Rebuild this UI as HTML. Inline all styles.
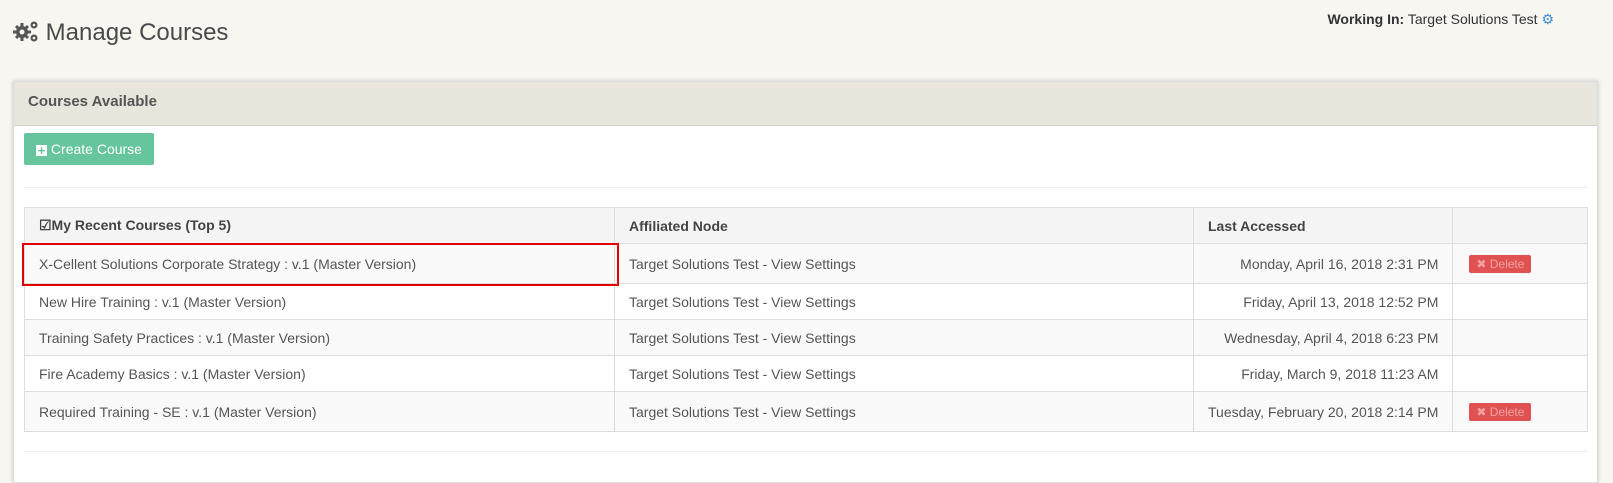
<!DOCTYPE html>
<html><head><style>
body{margin:0;width:1613px;height:465px;background:#f7f6f1;font-family:"Liberation Sans",sans-serif;color:#555;overflow:hidden;position:relative}
.abs{position:absolute}
h1{position:absolute;left:13px;top:19px;margin:0;font-weight:normal;font-size:24px;color:#4a4a4a;}
.work{position:absolute;right:59px;top:11px;font-size:14px;color:#333}
.panel{position:absolute;left:13px;top:81px;width:1583px;height:400px;background:#fff;border:1px solid #ddd;box-shadow:0 0 4px rgba(0,0,0,.2)}
.ph{height:43px;background:#e8e5dd;border-bottom:1px solid #d6d2c8;font-weight:bold;font-size:15px;color:#555;line-height:40px;padding-left:14px}
.btn{position:absolute;left:10px;top:51px;width:130px;height:32px;background:#66c59c;color:#fff;border-radius:2px;font-size:14px;line-height:32px;text-align:center}
table{position:absolute;left:10px;top:125px;width:1564px;border-collapse:collapse;font-size:14px}
td,th{border:1px solid #ddd;padding:0 14px;text-align:left;white-space:nowrap}
th{height:35px;background:#f4f4f4;color:#444;font-size:14px}
tr.o td{background:#f9f9f9}
td.r{text-align:right}
.del{display:inline-block;background:#e05252;color:#f4a0a0;font-size:12px;padding:2px 7px;border-radius:2px;margin-left:2px}
</style></head><body>
<h1><svg width="26" height="24" viewBox="0 0 26 24" style="vertical-align:-3px"><g fill="#555"><circle cx="9" cy="13" r="6"/><g stroke="#555" stroke-width="3"><line x1="9" y1="4" x2="9" y2="22"/><line x1="0" y1="13" x2="18" y2="13"/><line x1="3" y1="7" x2="15" y2="19"/><line x1="3" y1="19" x2="15" y2="7"/></g><circle cx="9" cy="13" r="2.5" fill="#f7f6f1"/><circle cx="21" cy="6" r="3.5"/><circle cx="21" cy="19" r="3.5"/><circle cx="21" cy="6" r="1.3" fill="#f7f6f1"/><circle cx="21" cy="19" r="1.3" fill="#f7f6f1"/></g></svg> Manage Courses</h1>
<div class="work"><b>Working In:</b> Target Solutions Test <span style="color:#3a8ad0">&#9881;</span></div>
<div class="panel">
<div class="ph">Courses Available</div>
<div class="btn"><span style="display:inline-block;width:11px;height:11px;background:#fff;color:#66c59c;font-weight:bold;line-height:11px;font-size:13px;vertical-align:-1px">+</span> Create Course</div>
<div class="abs" style="left:10px;top:105px;width:1564px;border-top:1px solid #eee"></div>
<table>
<tr><th style="width:561px">☑My Recent Courses (Top 5)</th><th style="width:550px">Affiliated Node</th><th style="width:230px">Last Accessed</th><th></th></tr>
<tr class="o" style="height:40px"><td>X-Cellent Solutions Corporate Strategy : v.1 (Master Version)</td><td>Target Solutions Test - View Settings</td><td class="r">Monday, April 16, 2018 2:31 PM</td><td><span class="del">✖ Delete</span></td></tr>
<tr style="height:36px"><td>New Hire Training : v.1 (Master Version)</td><td>Target Solutions Test - View Settings</td><td class="r">Friday, April 13, 2018 12:52 PM</td><td></td></tr>
<tr class="o" style="height:36px"><td>Training Safety Practices : v.1 (Master Version)</td><td>Target Solutions Test - View Settings</td><td class="r">Wednesday, April 4, 2018 6:23 PM</td><td></td></tr>
<tr style="height:36px"><td>Fire Academy Basics : v.1 (Master Version)</td><td>Target Solutions Test - View Settings</td><td class="r">Friday, March 9, 2018 11:23 AM</td><td></td></tr>
<tr class="o" style="height:40px"><td>Required Training - SE : v.1 (Master Version)</td><td>Target Solutions Test - View Settings</td><td class="r">Tuesday, February 20, 2018 2:14 PM</td><td><span class="del">✖ Delete</span></td></tr>
</table>
<div class="abs" style="left:10px;top:369px;width:1564px;border-top:1px solid #eee"></div>
</div>
<div class="abs" style="left:22px;top:243px;width:593px;height:39px;border:2px solid #e00000"></div>
</body></html>
